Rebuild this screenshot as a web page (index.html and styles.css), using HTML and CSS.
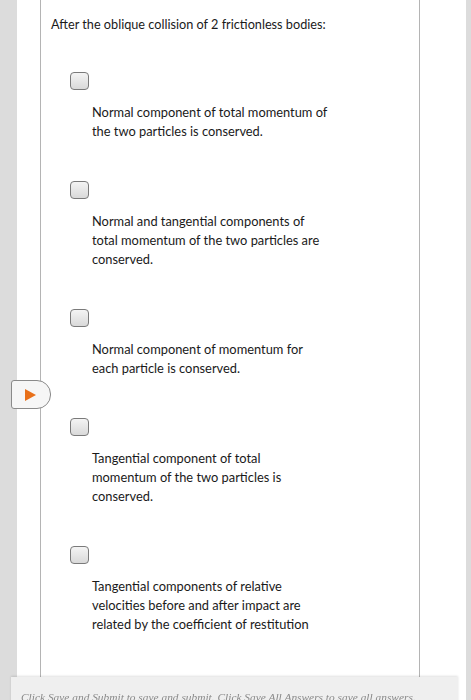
FILE: index.html
```html
<!DOCTYPE html>
<html lang="en">
<head>
    <meta charset="UTF-8">
    <meta name="viewport" content="width=device-width, initial-scale=1.0">
    <title>Question</title>
    <link rel="stylesheet" href="styles.css">
</head>
<body>

<div class="page">
    <div class="question-box">
        <p class="question">After the oblique collision of 2 frictionless bodies:</p>

        <!-- Answer options -->
        <div class="option">
            <span class="checkbox"></span>
            <p class="option-text">Normal component of total momentum of<br>the two particles is conserved.</p>
        </div>

        <div class="option">
            <span class="checkbox"></span>
            <p class="option-text">Normal and tangential components of<br>total momentum of the two particles are<br>conserved.</p>
        </div>

        <div class="option">
            <span class="checkbox"></span>
            <p class="option-text">Normal component of momentum for<br>each particle is conserved.</p>
        </div>

        <div class="option">
            <span class="checkbox"></span>
            <p class="option-text">Tangential component of total<br>momentum of the two particles is<br>conserved.</p>
        </div>

        <div class="option">
            <span class="checkbox"></span>
            <p class="option-text">Tangential components of relative<br>velocities before and after impact are<br>related by the coefficient of restitution</p>
        </div>
    </div>
</div>

<!-- Side tab -->
<div class="side-tab"><span class="tab-arrow"></span></div>

<!-- Footer hint -->
<div class="footer-bar">
    <p>Click Save and Submit to save and submit. Click Save All Answers to save all answers.</p>
</div>

</body>
</html>
```

FILE: styles.css
```css
body {
    margin: 0;
    background-color: #dcdcdc;
    font-family: Lato, "Noto Sans", sans-serif;
    color: #1a1a1a;
}

.page {
    margin: 0 5px 0 17px;
    background-color: #fff;
    min-height: 760px;
}

.question-box {
    margin: 0 46px 0 23px;
    border-left: 1px solid #b4b4b4;
    border-right: 1px solid #b4b4b4;
    min-height: 760px;
    padding: 15px 0 0 10px;
}

.question {
    margin: 0;
    font-size: 12.7px;
    line-height: 19px;
}

.option {
    padding-left: 19px;
}

.question + .option {
    margin-top: 38px;
}

.option + .option {
    margin-top: 40px;
}

.checkbox {
    display: block;
    width: 17px;
    height: 16px;
    border: 1px solid #7a7a7a;
    border-radius: 4px;
    background: linear-gradient(#f4f4f4, #d9d9d9);
}

.option-text {
    margin: 13px 0 0 22px;
    font-size: 12.85px;
    line-height: 19px;
    white-space: nowrap;
}

.side-tab {
    position: absolute;
    left: 11px;
    top: 380px;
    width: 38px;
    height: 27px;
    border: 1px solid #8a8a8a;
    border-radius: 3px 14px 14px 3px;
    background-color: #f6f6f6;
}

.tab-arrow {
    position: absolute;
    left: 13px;
    top: 8px;
    width: 0;
    height: 0;
    border-top: 6px solid transparent;
    border-bottom: 6px solid transparent;
    border-left: 11px solid #e8701a;
}

.footer-bar {
    position: fixed;
    left: 11px;
    top: 677px;
    width: 447px;
    height: 40px;
    background-color: #efefef;
    box-shadow: 0 -1px 2px rgba(0, 0, 0, 0.12);
}

.footer-bar p {
    margin: 0;
    padding: 14px 0 0 10px;
    font-family: "Liberation Serif", serif;
    font-style: italic;
    font-size: 11.4px;
    color: #8a8a8a;
    white-space: nowrap;
}
```
